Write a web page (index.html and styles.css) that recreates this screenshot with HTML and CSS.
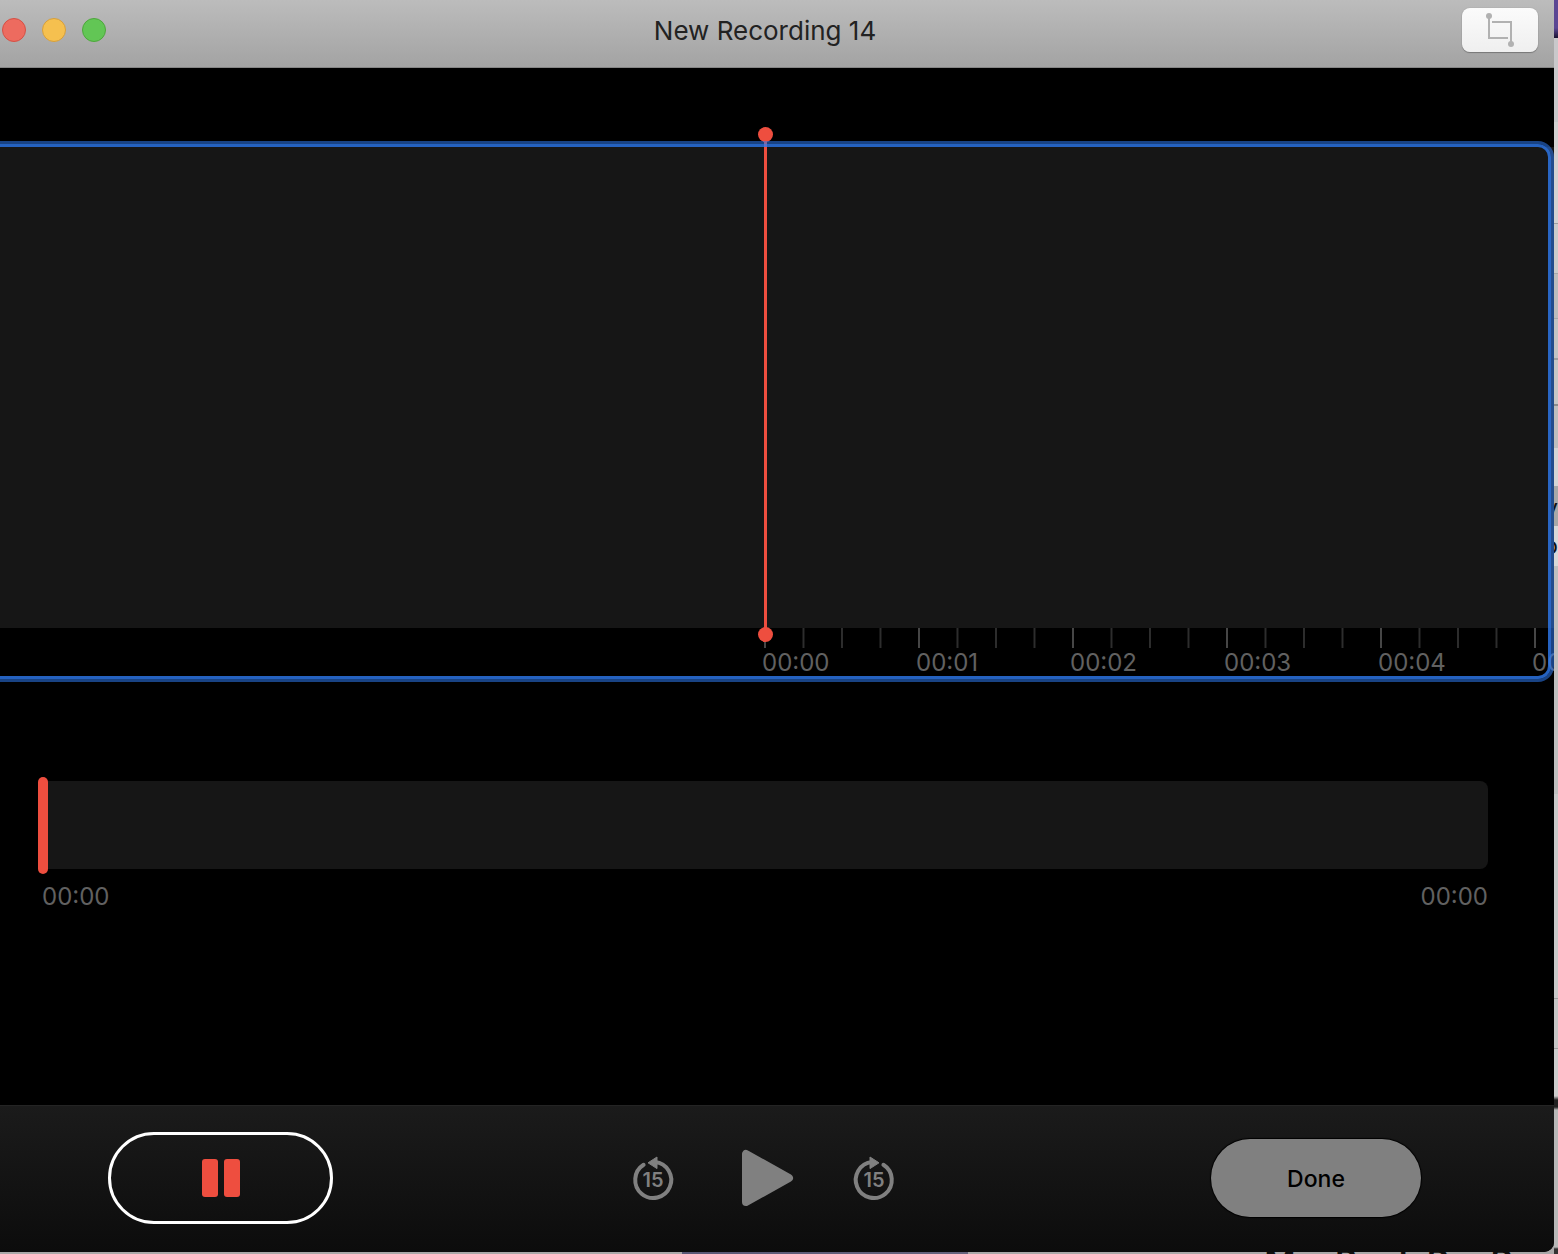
FILE: index.html
```html
<!DOCTYPE html>
<html lang="en">
<head>
  <meta charset="UTF-8" />
  <title>New Recording 14</title>
  <link rel="stylesheet" href="styles.css">
</head>
<body>
  <!-- Edge of the app behind the window -->
  <div class="behind" aria-hidden="true">
    <span class="row-text view">v</span>
    <span class="row-text pages">p</span>
    <span class="footer-text">MacBook Pro Pro</span>
  </div>

  <div class="window">
    <header class="titlebar">
      <div class="lights">
        <button class="light close" aria-label="Close"></button>
        <button class="light minimize" aria-label="Minimize"></button>
        <button class="light zoom" aria-label="Zoom"></button>
      </div>
      <h1>New Recording 14</h1>
      <button class="trim" aria-label="Trim">
        <svg width="32" height="36" viewBox="0 0 32 36">
          <g fill="none" stroke="#b1b1b1" stroke-width="2">
            <path d="M5 4V26H24" />
            <path d="M8 10H27V32" />
          </g>
          <circle cx="5" cy="4" r="3" fill="#b1b1b1" />
          <circle cx="27" cy="32" r="3" fill="#b1b1b1" />
        </svg>
      </button>
    </header>

    <main>
      <section class="editor" aria-label="Waveform">
        <div class="wave"></div>
        <div class="ruler">
          <div class="second"><span>00:00</span></div>
          <div class="second"><span>00:01</span></div>
          <div class="second"><span>00:02</span></div>
          <div class="second"><span>00:03</span></div>
          <div class="second"><span>00:04</span></div>
          <div class="second"><span>00:05</span></div>
        </div>
        <div class="playhead"></div>
      </section>

      <section class="overview">
        <input class="scrubber" type="range" min="0" max="100" value="0" aria-label="Position">
        <div class="times">
          <span>00:00</span>
          <span>00:00</span>
        </div>
      </section>
    </main>

    <footer class="controls">
      <button class="pause" aria-label="Pause">
        <svg width="38" height="38" viewBox="0 0 38 38" fill="#ee4e3f">
          <rect x="0" y="0" width="16" height="38" rx="3" />
          <rect x="22" y="0" width="16" height="38" rx="3" />
        </svg>
      </button>

      <div class="transport">
        <button aria-label="Back 15 seconds">
          <svg width="40" height="44" viewBox="0 0 40 44">
            <path d="M21 6.1A18 18 0 1 1 9.6 8.8" fill="none" stroke="#808080" stroke-width="4" stroke-linecap="round" />
            <path d="M14 6.8L23 1V12.6Z" fill="#808080" stroke="#808080" stroke-linejoin="round" />
            <text x="19" y="31">15</text>
          </svg>
        </button>
        <button aria-label="Play">
          <svg width="61" height="58" viewBox="0 0 61 58">
            <path d="M12 5V53L55 29Z" fill="#808080" stroke="#808080" stroke-width="8" stroke-linejoin="round" />
          </svg>
        </button>
        <button aria-label="Forward 15 seconds">
          <svg width="40" height="44" viewBox="0 0 40 44">
            <path d="M17 6.1A18 18 0 1 0 28.4 8.8" fill="none" stroke="#808080" stroke-width="4" stroke-linecap="round" />
            <path d="M24 6.8L15 1V12.6Z" fill="#808080" stroke="#808080" stroke-linejoin="round" />
            <text x="19" y="31">15</text>
          </svg>
        </button>
      </div>

      <button class="done">Done</button>
    </footer>
  </div>
</body>
</html>
```
FILE: styles.css
```css
* {
  box-sizing: border-box;
}

body {
  margin: 0;
  height: 100vh;
  padding: 0 4px 2px 0;
  position: relative;
  overflow: hidden;
  font-family: Inter, "Liberation Sans", sans-serif;
  background-color: #a9a8a8;
}

button {
  padding: 0;
  border: 0;
  background: none;
  font-family: inherit;
}

svg {
  display: block;
  overflow: visible;
}

/* Whatever shows past the right and bottom edges */
.behind {
  position: absolute;
  inset: 0;
  overflow: hidden;
  background:
    linear-gradient(90deg, transparent 682px, #5a5876 682px, #66647e 968px, transparent 968px) 0 100% / 100% 2px no-repeat,
    linear-gradient(#5b4693 0 28px, #1a1230 38px, #c9c8cb 38px 122px, #d3d2d2 122px 223px,
      #a0a0a0 223px 224px, #cbcbcb 224px 273px, #a9a9a9 273px 274px, #bdbdbd 274px 318px,
      #a9a9a9 318px 319px, #c4c4c4 319px 358px, #a0a0a0 358px 360px, #c6c6c6 360px 404px,
      #8c8c8c 404px 406px, #bebebe 406px 448px, #d5d5d5 448px 486px, #a8a8a8 486px 526px,
      #d8d8d8 526px 566px, #bfbfbf 566px 794px, #c9c9c9 794px 998px, #a0a0a0 998px 999px,
      #c6c6c6 999px 1048px, #a0a0a0 1048px 1049px, #cdcdcd 1049px 1096px, #222 1100px 1107px,
      #b8b8b8 1110px 1247px, #333 1249px) 100% 0 / 4px 100% no-repeat;
}

.row-text,
.footer-text {
  position: absolute;
  font-size: 24px;
  line-height: 32px;
  color: #111;
  white-space: nowrap;
}

.row-text {
  right: 0;
}

.view {
  top: 492px;
}

.pages {
  top: 530px;
}

.footer-text {
  right: 12px;
  top: calc(100% - 8px);
  font-size: 34px;
  font-weight: 600;
}

.window {
  position: relative;
  display: flex;
  flex-direction: column;
  height: 100%;
  overflow: hidden;
  background-color: #000;
  border-bottom-right-radius: 10px;
}

.titlebar {
  display: grid;
  grid-template-columns: 1fr auto 1fr;
  align-items: center;
  height: 68px;
  padding: 0 26px 7px 2px;
  background: linear-gradient(#bcbcbc, #a3a3a3);
  border-bottom: 1px solid #858585;
}

.lights {
  display: flex;
  gap: 16px;
}

.light {
  width: 24px;
  height: 24px;
  border-radius: 50%;
}

.close {
  background-color: #ed6b5f;
  border: 1px solid #d55045;
}

.minimize {
  background-color: #f5c04f;
  border: 1px solid #d69f3c;
}

.zoom {
  background-color: #62c655;
  border: 1px solid #4ea73c;
}

.titlebar h1 {
  margin: 0;
  padding-top: 2px;
  font-size: 26px;
  font-weight: 400;
  line-height: 32px;
  color: #222;
}

.trim {
  display: flex;
  align-items: center;
  justify-content: center;
  justify-self: end;
  width: 76px;
  height: 44px;
  margin-right: -10px;
  border-radius: 8px;
  background: linear-gradient(#fbfbfb, #efefef);
  box-shadow: 0 1px 1px #777, 0 0 1px #888;
}

main {
  flex: 1;
  display: flex;
  flex-direction: column;
  padding-top: 73px;
}

.editor {
  position: relative;
  flex: 1;
  display: flex;
  flex-direction: column;
}

/* Focus ring, drawn over the ruler labels */
.editor::after {
  content: "";
  position: absolute;
  inset: 0 0 0 -24px;
  border: 3px solid rgba(46, 122, 240, 0.55);
  border-radius: 16px;
  box-shadow: inset 0 0 0 3px rgba(46, 122, 240, 0.8);
}

.wave {
  flex: 1;
  margin-top: 6px;
  background-color: #161616;
}

.ruler {
  display: flex;
  height: 54px;
  padding-left: calc(50% - 13px);
  overflow: hidden;
}

.second {
  flex: 0 0 154px;
  padding-top: 19px;
  background:
    linear-gradient(#464646, #464646) 0 0 / 2px 20px no-repeat,
    linear-gradient(90deg, #2d2d2d 2px, transparent 2px) 0 0 / 25% 20px repeat-x;
}

.second span {
  display: block;
  margin-left: -2px;
}

.second,
.times {
  font-size: 24px;
  line-height: 32px;
  color: #616161;
}

.playhead {
  position: absolute;
  left: calc(50% - 13px);
  top: -6px;
  bottom: 47px;
  width: 3px;
  background-color: #ee4e3f;
}

.playhead::before,
.playhead::after {
  content: "";
  position: absolute;
  left: -6px;
  width: 15px;
  height: 15px;
  border-radius: 50%;
  background-color: #ee4e3f;
}

.playhead::before {
  top: -8px;
}

.playhead::after {
  bottom: -7px;
}

.overview {
  padding: 94px 66px 192px 38px;
}

.scrubber {
  -webkit-appearance: none;
  appearance: none;
  display: block;
  width: 100%;
  height: 97px;
  margin: 0;
  background: none;
}

.scrubber::-webkit-slider-runnable-track {
  height: 88px;
  border-radius: 8px;
  background-color: #161616;
}

.scrubber::-webkit-slider-thumb {
  -webkit-appearance: none;
  width: 10px;
  height: 97px;
  margin-top: -4px;
  border-radius: 5px;
  background-color: #ee4e3f;
}

.times {
  display: flex;
  justify-content: space-between;
  margin-top: 8px;
  padding-left: 4px;
}

.controls {
  display: grid;
  grid-template-columns: 1fr auto 1fr;
  align-items: center;
  height: 147px;
  padding: 0 133px 2px 108px;
  background: linear-gradient(#1b1b1b, #0c0c0c);
  border-top: 1px solid #242424;
}

.pause {
  display: flex;
  align-items: center;
  justify-content: center;
  width: 225px;
  height: 92px;
  border: 3px solid #fff;
  border-radius: 46px;
}

.transport {
  display: flex;
  align-items: center;
  gap: 60px;
}

.transport text {
  font-size: 20px;
  font-weight: 600;
  fill: #808080;
  text-anchor: middle;
}

.done {
  justify-self: end;
  width: 210px;
  height: 78px;
  padding-top: 2px;
  border-radius: 39px;
  background-color: #808080;
  box-shadow: 0 0 1px 1px #000;
  font-size: 23px;
  font-weight: 500;
  color: #000;
}
```
